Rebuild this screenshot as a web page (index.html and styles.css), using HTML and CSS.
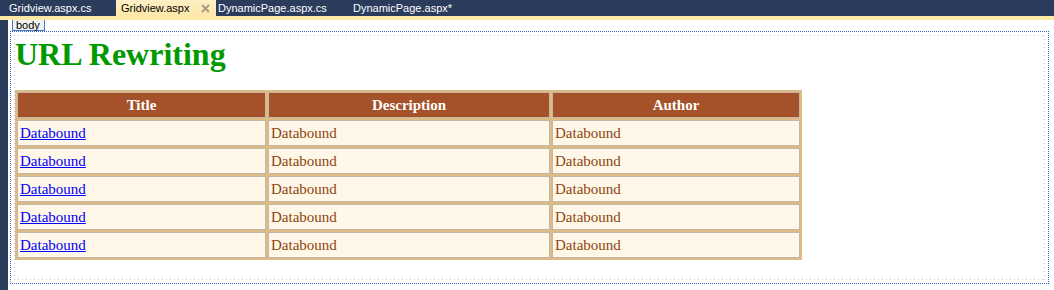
FILE: index.html
```html
<!DOCTYPE html>
<html>
<head>
<meta charset="utf-8">
<link rel="stylesheet" href="styles.css">
</head>
<body>
<div class="tabbar">
  <div class="tab tab-1">Gridview.aspx.cs</div>
  <div class="tab tab-active"><span>Gridview.aspx</span>
    <svg class="close" width="9" height="9" viewBox="0 0 9 9"><path d="M1 1L8 8M8 1L1 8" stroke="#a89a7c" stroke-width="1.8" fill="none"/></svg>
  </div>
  <div class="tab tab-3">DynamicPage.aspx.cs</div>
  <div class="tab tab-4">DynamicPage.aspx*</div>
</div>
<div class="strip"></div>
<div class="main">
  <div class="leftbar"></div>
  <div class="canvas">
    <div class="taglabel">body</div>
    <div class="outer">
      <div class="inner">
        <h1 class="title">URL Rewriting</h1>
        <table class="grid">
          <colgroup><col class="c1"><col class="c2"><col class="c3"></colgroup>
          <tr><th>Title</th><th>Description</th><th>Author</th></tr>
          <tr><td><a href="#">Databound</a></td><td>Databound</td><td>Databound</td></tr>
          <tr><td><a href="#">Databound</a></td><td>Databound</td><td>Databound</td></tr>
          <tr><td><a href="#">Databound</a></td><td>Databound</td><td>Databound</td></tr>
          <tr><td><a href="#">Databound</a></td><td>Databound</td><td>Databound</td></tr>
          <tr><td><a href="#">Databound</a></td><td>Databound</td><td>Databound</td></tr>
        </table>
      </div>
    </div>
  </div>
</div>
</body>
</html>
```
FILE: styles.css
```css
html, body {
  margin: 0;
  padding: 0;
  background: #ffffff;
  width: 1054px;
  height: 290px;
  overflow: hidden;
}
.tabbar {
  display: flex;
  height: 16px;
  background: #2a3b5b;
  font-family: "Liberation Sans", Arial, sans-serif;
  font-size: 11px;
  line-height: 16px;
  color: #ffffff;
}
.tab { box-sizing: border-box; white-space: nowrap; flex-shrink: 0; }
.tab-1 { width: 116px; padding-left: 9px; }
.tab-active {
  width: 100px;
  padding-left: 5px;
  color: #000000;
  background: linear-gradient(#fdf0c6, #fde8a8);
  display: flex;
  align-items: center;
}
.close { margin-left: 12px; flex-shrink: 0; }
.tab-3 { width: 137px; padding-left: 2px; }
.tab-4 { padding-left: 0; }
.strip { height: 4px; background: #fde8a6; }
.main { display: flex; height: 270px; }
.leftbar { width: 8px; background: #2a3b5b; }
.canvas { flex: 1; background: #ffffff; }
.taglabel {
  box-sizing: border-box;
  margin-left: 4px;
  width: 33px;
  height: 11px;
  background: #f2f2f2;
  border: 1px solid #4a78c8;
  border-top: none;
  font-family: "Liberation Sans", Arial, sans-serif;
  font-size: 11px;
  line-height: 10px;
  padding-left: 3px;
  color: #000;
}
.outer {
  box-sizing: border-box;
  margin-left: 2px;
  width: 1039px;
  height: 253px;
  border: 1px dotted #3366cc;
  padding: 3px;
}
.inner {
  box-sizing: border-box;
  height: 245px;
  padding: 1px;
  background:
    repeating-linear-gradient(to right, #c4c4c4 0 1px, transparent 1px 4px) top left / 100% 1px no-repeat,
    repeating-linear-gradient(to right, #c4c4c4 0 1px, transparent 1px 4px) bottom left / 100% 1px no-repeat,
    repeating-linear-gradient(to bottom, #c4c4c4 0 1px, transparent 1px 4px) top left / 1px 100% no-repeat,
    repeating-linear-gradient(to bottom, #c4c4c4 0 1px, transparent 1px 4px) top right / 1px 100% no-repeat;
}
.title {
  margin: 0 0 17px 0;
  font-family: "Liberation Serif", "Times New Roman", serif;
  font-size: 32px;
  line-height: 37px;
  font-weight: bold;
  color: #009900;
}
.grid {
  width: 787px;
  table-layout: fixed;
  border-collapse: separate;
  border-spacing: 2px;
  background: #deba84;
  font-family: "Liberation Serif", "Times New Roman", serif;
  font-size: 15px;
}
.c1 { width: 249px; }
.c2 { width: 282px; }
.c3 { width: 248px; }
.grid th, .grid td {
  box-sizing: border-box;
  height: 26px;
  padding: 0 2px;
  border: 1px solid #c4b8a4;
  white-space: nowrap;
}
.grid th {
  background: #a55129;
  color: #ffffff;
  font-weight: bold;
  text-align: center;
}
.grid td {
  background: #fff7e7;
  color: #8c4510;
  text-align: left;
}
.grid a { color: #0000ff; text-decoration: underline; }
```
